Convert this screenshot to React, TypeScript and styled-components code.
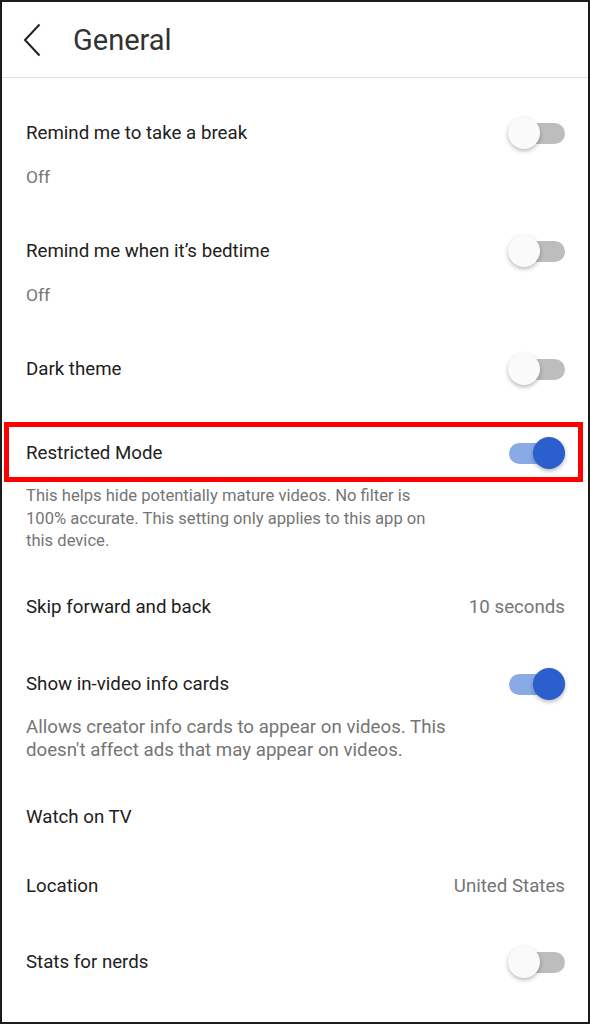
import React from 'react';
import styled, { createGlobalStyle } from 'styled-components';

const GlobalStyle = createGlobalStyle`
  html, body {
    margin: 0;
    padding: 0;
    background: #fff;
  }
  * {
    box-sizing: border-box;
  }
`;

const Screen = styled.div`
  width: 590px;
  height: 1024px;
  border: 2px solid #1c1c1c;
  background: #fff;
  font-family: Roboto, 'Noto Sans', sans-serif;
  overflow: hidden;
`;

const Header = styled.header`
  height: 76px;
  display: flex;
  align-items: center;
  gap: 32px;
  padding-left: 21px;
  border-bottom: 1px solid #e0e0e0;

  .title {
    color: #333;
    font-size: 29px;
    font-weight: 400;
  }
`;

const BackButton = styled.button`
  width: 18px;
  height: 34px;
  padding: 0;
  border: none;
  background: none;
  display: flex;
  align-items: center;
  justify-content: center;
  cursor: pointer;
`;

const List = styled.div`
  padding: 0 23px 0 24px;
`;

const Setting = styled.div<{ $top: number }>`
  padding-top: ${(props) => props.$top}px;
`;

const Head = styled.div<{ $marked?: boolean }>`
  position: relative;
  height: 44px;
  display: flex;
  align-items: center;
  justify-content: space-between;

  .label {
    margin-top: 2px;
    color: #212121;
    font-size: 18.7px;
  }
  .value {
    margin-top: 2px;
    color: #757575;
    font-size: 18.7px;
  }

  ${(props) =>
    props.$marked &&
    `
    &::after {
      content: '';
      position: absolute;
      top: -8px;
      bottom: -8px;
      left: -22px;
      right: -18px;
      border: 5px solid #ff0000;
      pointer-events: none;
    }
  `}
`;

const State = styled.div`
  margin-top: 12px;
  color: #757575;
  font-size: 17.4px;
  line-height: 22px;
`;

// descriptions keep their own line breaks
const Description = styled.div<{ $size: number }>`
  margin-top: 11px;
  color: #757575;
  font-size: ${(props) => props.$size}px;
  line-height: 22.5px;
  white-space: pre-line;
`;

const Switch = styled.div<{ $on: boolean }>`
  position: relative;
  width: 57px;
  height: 32px;
  margin-top: 2px;

  .track {
    position: absolute;
    left: 1px;
    right: 0;
    top: 6px;
    height: 21px;
    border-radius: 11px;
    background: ${(props) => (props.$on ? '#8aaae6' : '#bdbdbd')};
  }
  .knob {
    position: absolute;
    top: 0;
    left: ${(props) => (props.$on ? '25px' : '0')};
    width: 32px;
    height: 32px;
    border-radius: 50%;
    background: ${(props) => (props.$on ? '#2a5fcd' : '#fafafa')};
    box-shadow: 0 2px 4px rgba(0, 0, 0, 0.28);
  }
`;

const Toggle = ({ on }: { on: boolean }) => (
  <Switch $on={on}>
    <div className='track'></div>
    <div className='knob'></div>
  </Switch>
);

interface Item {
  label: string;
  top: number;
  toggle?: boolean;
  value?: string;
  state?: string;
  description?: string;
  descSize?: number;
  marked?: boolean;
}

const items: Item[] = [
  { label: 'Remind me to take a break', top: 32, toggle: false, state: 'Off' },
  { label: 'Remind me when it\u2019s bedtime', top: 40, toggle: false, state: 'Off' },
  { label: 'Dark theme', top: 40, toggle: false },
  {
    label: 'Restricted Mode',
    top: 40,
    toggle: true,
    marked: true,
    descSize: 16.6,
    description:
      'This helps hide potentially mature videos. No filter is\n100% accurate. This setting only applies to this app on\nthis device.',
  },
  { label: 'Skip forward and back', top: 31.5, value: '10 seconds' },
  {
    label: 'Show in-video info cards',
    top: 33,
    toggle: true,
    descSize: 18.7,
    description:
      "Allows creator info cards to appear on videos. This\ndoesn't affect ads that may appear on videos.",
  },
  { label: 'Watch on TV', top: 32.5 },
  { label: 'Location', top: 25, value: 'United States' },
  { label: 'Stats for nerds', top: 32, toggle: false },
];

const App = () => {
  return (
    <>
      <GlobalStyle />
      <Screen>
        <Header>
          <BackButton aria-label='Back'>
            <svg width='18' height='34' viewBox='0 0 18 34'>
              <polyline
                points='16.5,1.5 2,17 16.5,32.5'
                fill='none'
                stroke='#212121'
                strokeWidth='2'
              />
            </svg>
          </BackButton>
          <div className='title'>General</div>
        </Header>
        <List>
          {items.map((item) => (
            <Setting key={item.label} $top={item.top}>
              <Head $marked={item.marked}>
                <span className='label'>{item.label}</span>
                {item.toggle !== undefined && <Toggle on={item.toggle} />}
                {item.value && <span className='value'>{item.value}</span>}
              </Head>
              {item.state && <State>{item.state}</State>}
              {item.description && (
                <Description $size={item.descSize ?? 16.6}>{item.description}</Description>
              )}
            </Setting>
          ))}
        </List>
      </Screen>
    </>
  );
};

export default App;
